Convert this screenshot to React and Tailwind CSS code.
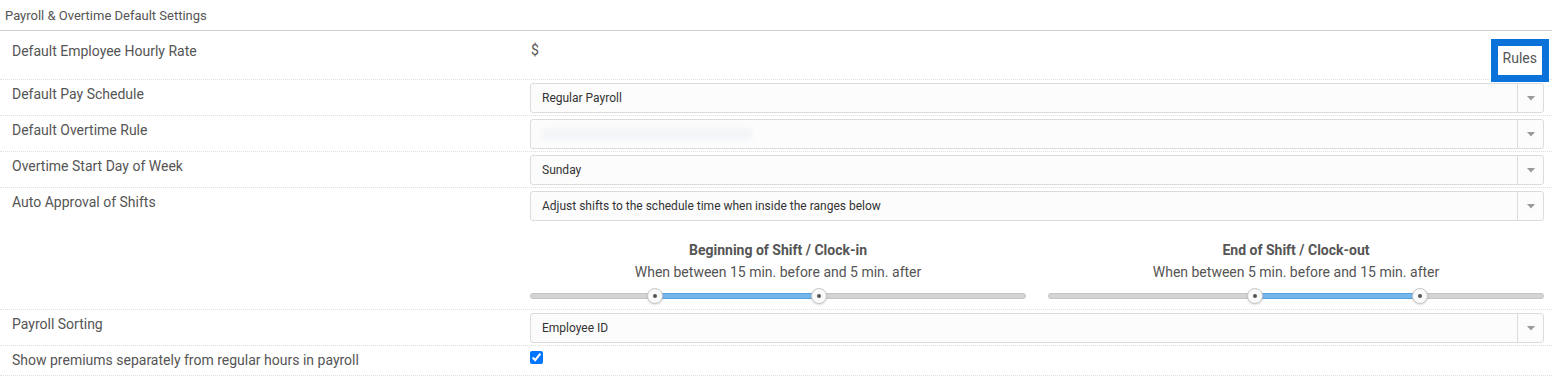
import React from 'react';

const font = { fontFamily: 'Roboto, "Noto Sans", sans-serif' };

function Caret() {
  return (
    <svg width="8" height="5" viewBox="0 0 8 5">
      <path d="M0 0 L8 0 L4 4.5 Z" fill="#9a9a9a" />
    </svg>
  );
}

function Select({ value, blurred }) {
  return (
    <div className="mt-[3px] h-[30px] flex items-stretch border border-[#dcdcdc] rounded-[3px] bg-[#fcfcfc]">
      <div className="flex-1 flex items-center pl-[11px] text-[12px] text-[#333]">
        {blurred ? (
          <div className="h-[12px] w-[210px] rounded bg-[#f3f5f8] blur-[2px]" />
        ) : (
          value
        )}
      </div>
      <div className="w-[26px] border-l border-[#dcdcdc] flex items-center justify-center">
        <Caret />
      </div>
    </div>
  );
}

function Row({ label, children, className = 'h-[36px]', labelPad = 'pt-[4px]' }) {
  return (
    <div className={`flex border-b border-dotted border-[#dedede] ${className}`}>
      <div className={`w-[530px] pl-3 text-[14px] leading-[20px] text-[#555] ${labelPad}`}>{label}</div>
      <div className="flex-1 pr-2">{children}</div>
    </div>
  );
}

function Handle({ left }) {
  return (
    <div
      className="absolute top-1/2 -translate-x-1/2 -translate-y-1/2 w-[16px] h-[16px] rounded-full bg-[#fafafa] border border-[#c8c8c8] shadow-sm flex items-center justify-center"
      style={{ left: `${left}%` }}
    >
      <div className="w-[4px] h-[4px] rounded-full bg-[#555]" />
    </div>
  );
}

function RangeSlider({ title, subtitle, from, to }) {
  // range runs from 30 min before to 30 min after
  const a = ((from + 30) / 60) * 100;
  const b = ((to + 30) / 60) * 100;
  return (
    <div className="flex flex-col items-center">
      <div className="text-[14px] font-bold text-[#555] leading-[20px]">{title}</div>
      <div className="mt-[2px] text-[14px] text-[#555] leading-[20px]">{subtitle}</div>
      <div className="relative w-full h-[6px] mt-[11px] rounded-full bg-[#d4d4d4] border border-[#c4c4c4]">
        <div
          className="absolute top-[-1px] bottom-[-1px] bg-[#74b6ee] border-y border-[#5aa2e2]"
          style={{ left: `${a}%`, width: `${b - a}%` }}
        />
        <Handle left={a} />
        <Handle left={b} />
      </div>
    </div>
  );
}

export default function App() {
  return (
    <div className="w-[1552px] h-[389px] bg-white" style={font}>
      <div className="h-[31px] border-b border-[#d0d0d0] pl-[5px] pt-[6px] text-[13px] leading-[20px] text-[#555]">
        Payroll &amp; Overtime Default Settings
      </div>

      <div className="relative">
        <Row label="Default Employee Hourly Rate" className="h-[49px]" labelPad="pt-[10px]">
          <div className="pt-[9px] pl-[1px] text-[14px] text-[#555]">$</div>
        </Row>
        <div className="absolute right-[3px] top-[8px] border-[7px] border-[#0b72d9] bg-white px-[5px] pt-[2px] h-[43px] flex items-start text-[14px] leading-[20px] text-[#555]">
          Rules
        </div>
      </div>

      <Row label="Default Pay Schedule">
        <Select value="Regular Payroll" />
      </Row>
      <Row label="Default Overtime Rule">
        <Select blurred />
      </Row>
      <Row label="Overtime Start Day of Week">
        <Select value="Sunday" />
      </Row>
      <Row label="Auto Approval of Shifts" className="h-[122px]">
        <Select value="Adjust shifts to the schedule time when inside the ranges below" />
        <div className="grid grid-cols-2 gap-[22px] mt-[19px]">
          <RangeSlider
            title="Beginning of Shift / Clock-in"
            subtitle="When between 15 min. before and 5 min. after"
            from={-15}
            to={5}
          />
          <RangeSlider
            title="End of Shift / Clock-out"
            subtitle="When between 5 min. before and 15 min. after"
            from={-5}
            to={15}
          />
        </div>
      </Row>
      <Row label="Payroll Sorting">
        <Select value="Employee ID" />
      </Row>
      <Row label="Show premiums separately from regular hours in payroll" className="h-[30px]">
        <input type="checkbox" defaultChecked className="mt-[5px] w-[13px] h-[13px] accent-[#0075ff]" />
      </Row>
    </div>
  );
}
